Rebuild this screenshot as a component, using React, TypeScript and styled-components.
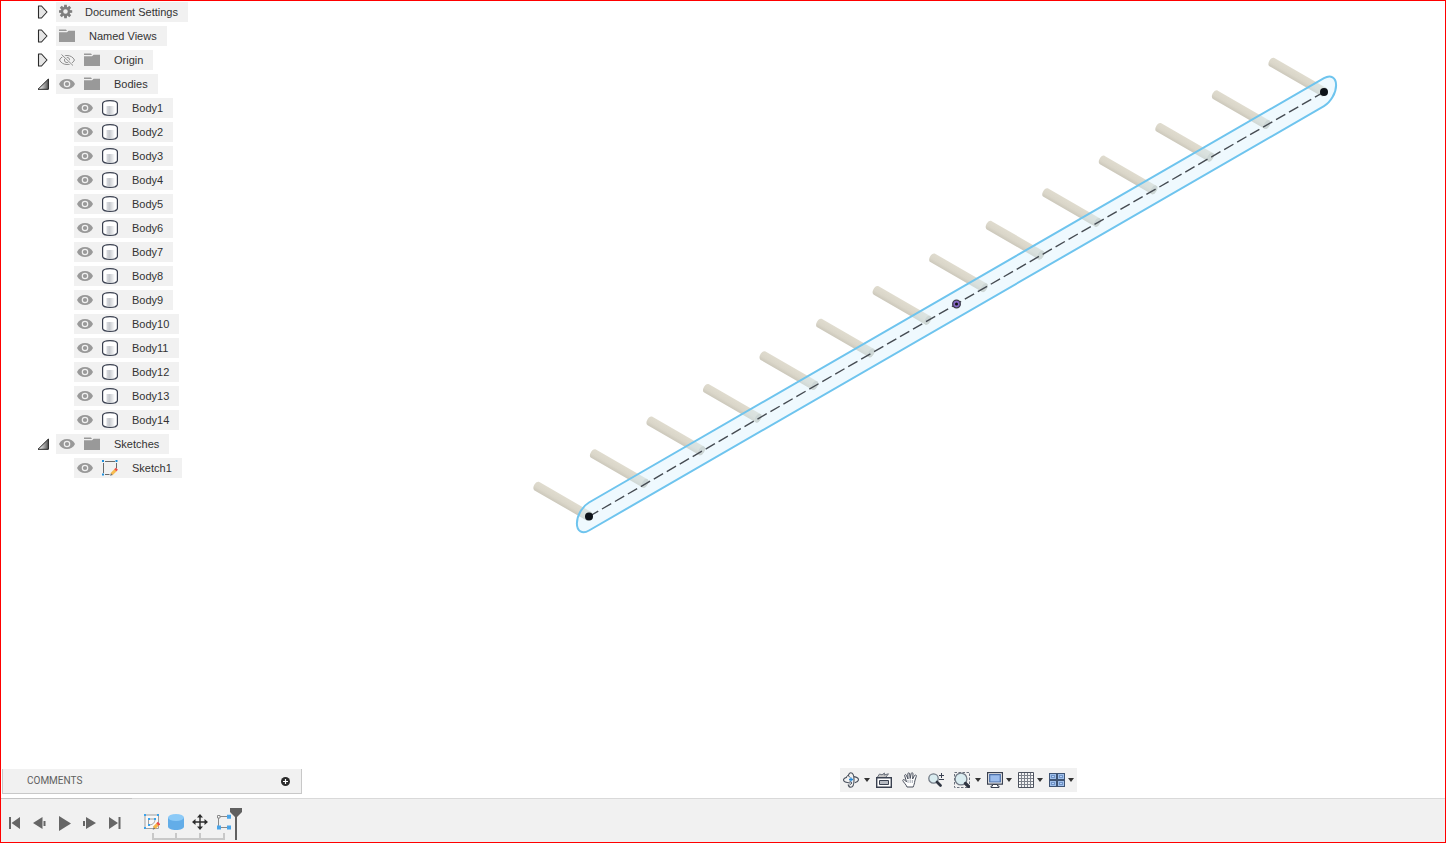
import React from "react";
import styled, { createGlobalStyle } from "styled-components";

const GlobalStyle = createGlobalStyle`
  *, *::before, *::after { box-sizing: border-box; }
  body { margin: 0; background: #ffffff; }
  ul { margin: 0; padding: 0; list-style: none; }
  button { margin: 0; padding: 0; border: 0; background: none; color: inherit; font: inherit; cursor: pointer; }
  svg { display: block; flex: none; }
`;

const Frame = styled.div`
  display: flex;
  flex-direction: column;
  min-height: 100vh;
  border: 1px solid #ff0000;
  background: #ffffff;
  color: #333333;
  font: 11px/20px "Liberation Sans", Arial, sans-serif;
`;

const Workspace = styled.main`
  display: grid;
  grid-template-columns: 301px minmax(0, 1fr);
  flex: 1;
`;

const Browser = styled.ul`
  display: flex;
  flex-direction: column;
  gap: 4px;
  padding: 1px 0 0 35px;
`;

const TreeRow = styled.li`
  display: flex;
  align-items: center;
  height: 20px;
`;

const Expander = styled.button`
  display: flex;
  justify-content: center;
  width: 14px;
  margin-right: 6px;
`;

const Chip = styled.div<{ $nested?: boolean }>`
  display: flex;
  align-items: center;
  height: 20px;
  margin-left: ${(p) => (p.$nested ? 38 : 0)}px;
  padding: 0 10px 0 3px;
  background: #f1f1f1;
`;

const ChipIcon = styled.span`
  display: flex;
  margin-right: 9px;
`;

const VisibilityButton = styled.button`
  display: flex;
  margin-right: 9px;
`;

const ItemName = styled.button<{ $indent: number }>`
  height: 20px;
  padding-left: ${(p) => p.$indent}px;
  white-space: nowrap;
`;

const Scene = styled.div`
  min-width: 0;
  svg { width: 100%; height: auto; }
`;

const Dock = styled.div`
  display: grid;
  grid-template-columns: 301px 538fr auto 368fr;
  align-items: start;
  height: 30px;
`;

const CommentsPanel = styled.section`
  display: flex;
  align-items: center;
  justify-content: space-between;
  height: 25px;
  margin: 1px 0 0 1px;
  padding: 0 11px 0 24px;
  border: 1px solid #c8c8c8;
  border-top: 0;
  background: #f1f1f1;
`;

const PanelTitle = styled.h2`
  margin: 0;
  color: #606060;
  font: 10px/20px Roboto, "Liberation Sans", sans-serif;
`;

const NavBar = styled.nav`
  grid-column: 3;
  display: flex;
  align-items: center;
  height: 24px;
  padding: 0 3px;
  background: #f1f1f1;
`;

const NavButton = styled.button<{ $caretGap?: number; $after: number }>`
  display: flex;
  align-items: center;
  gap: ${(p) => p.$caretGap ?? 0}px;
  margin-right: ${(p) => p.$after}px;
`;

const TimelineBar = styled.footer`
  display: flex;
  height: 44px;
  border-top: 1px solid #d9d9d9;
  background: #f1f1f1;
`;

const Playback = styled.div`
  display: flex;
  align-items: center;
  width: 131px;
  height: 44px;
  margin-top: -1px;
  padding: 5px 0 0 1px;
  border-top: 1px solid #c4c4c4;
`;

const PlayButton = styled.button`
  display: flex;
  justify-content: center;
  width: 25px;
`;

const Timeline = styled.div`
  position: relative;
  display: flex;
  flex-direction: column;
  gap: 3px;
  padding: 15px 0 0 8px;
`;

const Features = styled.div`
  display: flex;
`;

const FeatureButton = styled.button`
  display: flex;
  justify-content: center;
  width: 24px;
`;

const Marker = styled.div`
  position: absolute;
  top: 9px;
  left: 98px;
`;

const Icon = ({ children, w = 16, h = 16 }: { children: React.ReactNode; w?: number; h?: number }) => (
  <svg width={w} height={h} viewBox={`0 0 ${w} ${h}`} fill="none" aria-hidden="true">
    {children}
  </svg>
);

const ClosedArrow = () => (
  <Icon w={12} h={14}>
    <path d="M1.500 1h3l5.500 6-5.500 6h-3z" fill="#e6e6e6" stroke="#2a2a2a" strokeWidth="1.100" strokeLinejoin="round" />
  </Icon>
);

const OpenArrow = () => (
  <Icon w={12} h={12}>
    <defs>
      <linearGradient id="openArrow" x1="0" x2="1">
        <stop offset="0.2" stopColor="#eeeeee" />
        <stop offset="1" stopColor="#555555" />
      </linearGradient>
    </defs>
    <path d="M1 11.300 11.400 1v10.300z" fill="url(#openArrow)" stroke="#222222" strokeWidth="1" />
  </Icon>
);

const Gear = () => (
  <Icon>
    <g transform="translate(-1.500 -.5)">
      <g fill="#7f7f7f">
        {[0, 45, 90, 135, 180, 225, 270, 315].map((a) => (
          <path key={a} d="M6.700 1.300h2.600l.3 3H6.400z" transform={`rotate(${a} 8 8)`} />
        ))}
      </g>
      <circle cx="8" cy="8" r="3.500" stroke="#7f7f7f" strokeWidth="2.400" />
    </g>
  </Icon>
);

const Folder = () => (
  <Icon>
    <path d="M0 1.600h7l1 1.500H0z" fill="#999999" />
    <path d="M0 4.200h8l1.600-1.400H16V14H0z" fill="#999999" />
  </Icon>
);

const Eye = () => (
  <Icon>
    <path d="M0 8c1.500-3.300 4.600-5 8-5s6.500 1.700 8 5c-1.500 3.300-4.600 5-8 5s-6.500-1.700-8-5z" fill="#999999" />
    <circle cx="8" cy="8" r="2.700" stroke="#f1f1f1" strokeWidth="1.200" />
  </Icon>
);

const EyeOff = () => (
  <Icon>
    <path d="M.5 8C2 5 4.800 3.500 8 3.500S14 5 15.500 8C14 11 11.200 12.500 8 12.500S2 11 .5 8z" stroke="#8f8f8f" />
    <circle cx="8" cy="8" r="2.600" stroke="#8f8f8f" />
    <path d="m3 2.500 11 11" stroke="#f1f1f1" strokeWidth="2.500" />
    <path d="m2.500 2.500 11.500 11" stroke="#8f8f8f" />
  </Icon>
);

const Body = () => (
  <Icon>
    <defs>
      <linearGradient id="bodySide" x1="0" x2="1">
        <stop offset="0" stopColor="#d9dbdf" />
        <stop offset="0.350" stopColor="#c6c9ce" />
        <stop offset="1" stopColor="#ffffff" />
      </linearGradient>
    </defs>
    <path d="M.6 3.600C.8 1.500 3.600.6 8 .6s7.200.9 7.400 3v8.800c-.2 2.100-3 3-7.400 3s-7.200-.9-7.400-3z" fill="#ffffff" stroke="#3a4050" strokeWidth="1.200" />
    <path d="M4.500 6H13v8.300l-4 .4-4.500-.4z" fill="url(#bodySide)" />
  </Icon>
);

const Sketch = () => (
  <Icon>
    <path d="M3 1.500h10M1.500 3v10M14.500 3v5.500M3 14.500h4.500" stroke="#6a6a6a" />
    <path d="M0 0h2v2H0zM13.500 0h2v2h-2zM0 13.500h2v2H0z" fill="#1e8fdc" />
    <path d="m9.500 14.200 4.300-4.300" stroke="#f7bb50" strokeWidth="3" />
    <path d="m13.400 10.300 1.500-1.500" stroke="#ee4b4b" strokeWidth="3" />
    <path d="m8 15.800 1-2.500 1.700 1.700z" fill="#6f6f6f" />
  </Icon>
);

const Caret = () => (
  <Icon w={6} h={4}>
    <path d="M0 0h6L3 4z" fill="#333333" />
  </Icon>
);

const Orbit = () => (
  <Icon>
    <path d="M11 4.600c2.600.5 4.500 1.700 4.500 3.200 0 1.300-1.500 2.300-3.700 2.900M4 5.200C1.900 5.700.5 6.600.5 7.800c0 1.900 3 3 6.500 3.200" stroke="#4b525e" strokeWidth="1.100" />
    <path d="M5.200 4C5.700 2 6.600.7 7.800.7c1.900 0 3.200 3.300 3.200 7.300s-1.300 7.300-3.200 7.300c-1.300 0-2.200-1.100-2.700-2.800" stroke="#4b525e" strokeWidth="1.100" />
    <path d="M8 5.500v4M6 7.500h4" stroke="#2389db" strokeWidth="1.300" />
    <path d="M6.500 9.200 9 11l-2.500 2M3 5.500 5 3.200l2 2.300" stroke="#4b525e" />
  </Icon>
);

const LookAt = () => (
  <Icon>
    <path d="m1.500 5 2-3 2.500.8L8.500 1 8 3l4.500-1.200L10 5" fill="#c4c4c4" stroke="#6b717c" />
    <path d="M.7 5.700h14.600v9.600H.7z" fill="#ffffff" stroke="#3a4150" strokeWidth="1.400" />
    <path d="M3.500 8.500h9v4h-9z" fill="#b7bbc2" stroke="#3a4150" />
  </Icon>
);

const Hand = () => (
  <Icon>
    <path d="M5 15C4.300 12.500 1 10 .8 8.400c0-1 1.200-1.200 2-.2l1.700 1.700L2.700 3.800c-.3-1.300 1.200-1.800 1.700-.5L6 7 5.800 1.900c0-1.300 1.700-1.300 1.900 0L8.200 6.500l1-5c.3-1.200 1.900-.9 1.800.4L10.600 7l1.900-3.500c.8-1.100 2.200-.4 1.800.8L12.800 9c-.2 2.500-.9 3.800-1.600 6z" fill="#ffffff" stroke="#4a505d" strokeLinejoin="round" />
    <path d="M6 8v3M8.200 7.500V11M10.300 8v3" stroke="#a5abb5" />
  </Icon>
);

const Zoom = () => (
  <Icon>
    <circle cx="5.500" cy="6.500" r="4.700" fill="#d9ecf0" stroke="#737b86" strokeWidth="1.300" />
    <path d="m9 10 3.500 3.500" stroke="#2f3541" strokeWidth="2.800" strokeLinecap="round" />
    <path d="M11 3.500h5M13.500 1v5M11 7.500h5" stroke="#3a4150" />
  </Icon>
);

const Fit = () => (
  <Icon>
    <path d="M.5.5h15v15H.5z" stroke="#6b717c" strokeDasharray="2.500 1.500" />
    <circle cx="7" cy="7" r="5.900" fill="#d9ecf0" stroke="#737b86" strokeWidth="1.300" />
    <path d="m11.500 11.500 3 3" stroke="#2f3541" strokeWidth="3.200" strokeLinecap="round" />
  </Icon>
);

const Display = () => (
  <Icon>
    <path d="M.6.6h14.800v11.500H.6z" fill="#ffffff" stroke="#3a4150" strokeWidth="1.200" />
    <path d="M2.700 2.700h10.600V10H2.700z" fill="#9bbcec" stroke="#4c6fa8" strokeWidth="1.200" />
    <path d="M5.500 12.500h5v1.500H12v1.500H4V14h1.500z" fill="#ffffff" stroke="#3a4150" />
  </Icon>
);

const Grid = () => (
  <Icon>
    <path d="M.5.5h15v15H.5z" fill="#ffffff" />
    <path d="M3.500 0v16M6.500 0v16M9.500 0v16M12.500 0v16M0 3.500h16M0 6.500h16M0 9.500h16M0 12.500h16" stroke="#7d828b" strokeWidth="1.200" />
    <path d="M.5.5h15v15H.5z" stroke="#4c525e" />
  </Icon>
);

const Viewports = () => (
  <Icon>
    {[[0.5, 1.5], [8.5, 1.5], [0.5, 8.5], [8.5, 8.5]].map(([x, y]) => (
      <g key={`${x}-${y}`}>
        <rect x={x} y={y} width="7" height="6" fill="#9fbfea" stroke="#3f5474" />
        <rect x={x + 2} y={y + 2} width="3" height="2" fill="#b9d2f3" stroke="#6f93c8" />
      </g>
    ))}
  </Icon>
);

const grey = "#666666";
const ToStart = () => <Icon w={12} h={12}><path d="M0 0h2v12H0zM11 0v12L2.500 6z" fill={grey} /></Icon>;
const StepBack = () => <Icon w={13} h={12}><path d="M0 6 9.500 0v12zM10.500 4h2v5h-2z" fill={grey} /></Icon>;
const Play = () => <Icon w={12} h={15}><path d="M0 0v15l12-7.500z" fill={grey} /></Icon>;
const StepForward = () => <Icon w={13} h={12}><path d="M0 4h2v5H0zM3 0v12l10-6z" fill={grey} /></Icon>;
const ToEnd = () => <Icon w={12} h={12}><path d="M0 0v12l9-6zM9.500 0h2v12h-2z" fill={grey} /></Icon>;

const SketchFeature = () => (
  <Icon>
    <path d="M1 1h13.500v13.500H1z" fill="#f8f8f8" stroke="#a0a0a0" />
    <path d="M4.500 5h6.500c0 4-2.500 6-6.500 6z" stroke="#a0a0a0" />
    <path d="M0 0h2v2H0zM13 0h2v2h-2zM0 13h2v2H0zM4 4h2v2H4zM10 4h2v2h-2zM4 10h2v2H4z" fill="#3ba2ea" />
    <path d="m10 14 4-4" stroke="#f5b649" strokeWidth="3.200" />
    <path d="m13.500 10.500 1.500-1.500" stroke="#ee4b4b" strokeWidth="3.200" />
    <path d="m8.700 15.700 1-2.500 1.600 1.600z" fill="#6f6f6f" />
  </Icon>
);

const Cylinder = () => (
  <Icon>
    <path d="M0 3.500v9C0 14.700 3.500 16 8 16s8-1.300 8-3.500v-9z" fill="#63ade8" />
    <ellipse cx="8" cy="3.500" rx="8" ry="3.500" fill="#8ccaf7" />
  </Icon>
);

const Move = () => (
  <Icon>
    <path d="M8 2v12M2 8h12" stroke="#2c2c2c" strokeWidth="1.400" />
    <path d="m8 0 3 3.500H5zM8 16l-3-3.500h6zM0 8l3.500-3v6zM16 8l-3.500 3V5z" fill="#2c2c2c" />
  </Icon>
);

const Pattern = () => (
  <Icon>
    <path d="M2.500 4v9M4 2.500h8M4 13.500h8" stroke="#8a8a8a" />
    <path d="M1.500 1.500h2.500V4H1.500z" fill="#ffffff" stroke="#8a8a8a" />
    <path d="M11 .8h4v4h-4zM1 11.500h4v4H1zM11 11.500h4v4h-4z" fill="#4aa5e9" />
  </Icon>
);

type Row = { name: string; kind: "settings" | "view" | "hidden" | "group" | "body" | "sketch"; open?: boolean };

const rows: Row[] = [
  { name: "Document Settings", kind: "settings" },
  { name: "Named Views", kind: "view" },
  { name: "Origin", kind: "hidden" },
  { name: "Bodies", kind: "group", open: true },
  ...Array.from({ length: 14 }, (_, i): Row => ({ name: `Body${i + 1}`, kind: "body" })),
  { name: "Sketches", kind: "group", open: true },
  { name: "Sketch1", kind: "sketch" },
];

const TreeItem = ({ name, kind, open }: Row) => {
  const nested = kind === "body" || kind === "sketch";
  const toggles = kind !== "settings" && kind !== "view";
  return (
    <TreeRow>
      {!nested && (
        <Expander aria-label={`Expand ${name}`} aria-expanded={!!open}>
          {open ? <OpenArrow /> : <ClosedArrow />}
        </Expander>
      )}
      <Chip $nested={nested}>
        {toggles && (
          <VisibilityButton aria-label={`Toggle ${name}`}>
            {kind === "hidden" ? <EyeOff /> : <Eye />}
          </VisibilityButton>
        )}
        <ChipIcon>
          {kind === "settings" ? <Gear /> : kind === "body" ? <Body /> : kind === "sketch" ? <Sketch /> : <Folder />}
        </ChipIcon>
        <ItemName $indent={kind === "settings" ? 1 : 5}>{name}</ItemName>
      </Chip>
    </TreeRow>
  );
};

const rods = Array.from({ length: 14 }, (_, i) => 13 - i);

const Model = () => (
  <Scene>
    <svg viewBox="302 1 1143 767" role="img" aria-label="Slot sketch with fourteen rods">
      <defs>
        <linearGradient id="rod" x1="0" y1="-5" x2="0" y2="5" gradientUnits="userSpaceOnUse">
          <stop offset="0" stopColor="#e0dccf" />
          <stop offset="0.600" stopColor="#dad6c9" />
          <stop offset="1" stopColor="#cbc7ba" />
        </linearGradient>
      </defs>
      {rods.map((i) => (
        <g key={i} transform={`translate(${588.5 + i * 56.54} ${516 - i * 32.62}) rotate(30)`}>
          <path d="M-59.500-4.800H0c3.500 0 3.500 9.600 0 9.600h-59.500c-4 0-4-9.600 0-9.600z" fill="url(#rod)" />
          <ellipse cx="0" cy="0" rx="2.800" ry="4.800" fill="#c6c6bc" />
        </g>
      ))}
      <g transform="matrix(.866 -.5 0 1 589 516.500)">
        <rect x="-14" y="-14" width="876.700" height="28" rx="14" fill="#d8effc" fillOpacity="0.400" stroke="#6ec4ee" strokeWidth="2" vectorEffect="non-scaling-stroke" />
      </g>
      <path d="M956.500 304 589 516.500M956.500 304 1324 92" stroke="#454b52" strokeWidth="1.400" strokeDasharray="10.700 4.270" strokeDashoffset="5.350" />
      <circle cx="589" cy="516.500" r="4" fill="#0d1218" />
      <circle cx="1324" cy="92" r="4" fill="#0d1218" />
      <circle cx="956.500" cy="304" r="3.800" fill="#8467c4" stroke="#3d3b4b" strokeWidth="1.300" />
      <circle cx="956.500" cy="304" r="1.500" fill="#111111" />
    </svg>
  </Scene>
);

const navItems = [
  { label: "Orbit", icon: <Orbit />, caretGap: 5, after: 6 },
  { label: "Look At", icon: <LookAt />, after: 10 },
  { label: "Pan", icon: <Hand />, after: 10 },
  { label: "Zoom", icon: <Zoom />, after: 10 },
  { label: "Fit", icon: <Fit />, caretGap: 5, after: 6 },
  { label: "Display Settings", icon: <Display />, caretGap: 3, after: 6 },
  { label: "Grid and Snaps", icon: <Grid />, caretGap: 3, after: 6 },
  { label: "Viewports", icon: <Viewports />, caretGap: 3, after: 0 },
];

const playback = [
  { label: "Go to start", icon: <ToStart /> },
  { label: "Step back", icon: <StepBack /> },
  { label: "Play", icon: <Play /> },
  { label: "Step forward", icon: <StepForward /> },
  { label: "Go to end", icon: <ToEnd /> },
];

const features = [
  { label: "Sketch1", icon: <SketchFeature /> },
  { label: "Extrude1", icon: <Cylinder /> },
  { label: "Move1", icon: <Move /> },
  { label: "Pattern1", icon: <Pattern /> },
];

export default function App() {
  return (
    <>
      <GlobalStyle />
      <Frame>
        <Workspace>
          <Browser aria-label="Browser">
            {rows.map((row) => (
              <TreeItem key={row.name} {...row} />
            ))}
          </Browser>
          <Model />
        </Workspace>
        <Dock>
          <CommentsPanel>
            <PanelTitle>COMMENTS</PanelTitle>
            <button aria-label="Expand comments">
              <Icon w={9} h={9}>
                <circle cx="4.500" cy="4.500" r="4.500" fill="#2b2b2b" />
                <path d="M4.500 2v5M2 4.500h5" stroke="#ffffff" strokeWidth="1.200" />
              </Icon>
            </button>
          </CommentsPanel>
          <NavBar aria-label="Navigation">
            {navItems.map(({ label, icon, caretGap, after }) => (
              <NavButton key={label} aria-label={label} $caretGap={caretGap} $after={after}>
                {icon}
                {caretGap && <Caret />}
              </NavButton>
            ))}
          </NavBar>
        </Dock>
        <TimelineBar>
          <Playback>
            {playback.map(({ label, icon }) => (
              <PlayButton key={label} aria-label={label}>{icon}</PlayButton>
            ))}
          </Playback>
          <Timeline>
            <Features>
              {features.map(({ label, icon }) => (
                <FeatureButton key={label} aria-label={label}>{icon}</FeatureButton>
              ))}
            </Features>
            <Icon w={96} h={7}>
              <path d="M13 0v6h71V0M36 0v6M60 0v6" stroke="#c8c8c8" strokeWidth="2" />
            </Icon>
            <Marker>
              <Icon w={12} h={32}>
                <path d="M0 0h12v4L7 9v23H5V9L0 4z" fill="#606060" />
              </Icon>
            </Marker>
          </Timeline>
        </TimelineBar>
      </Frame>
    </>
  );
}
